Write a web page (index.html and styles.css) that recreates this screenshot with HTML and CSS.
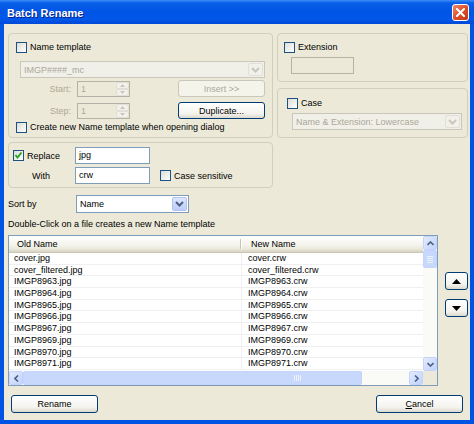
FILE: index.html
```html
<!DOCTYPE html>
<html lang="en">

<head>
  <meta charset="UTF-8">
  <title>Batch Rename</title>
  <link rel="stylesheet" href="styles.css">
</head>

<body>
  <div class="window">
    <div class="titlebar">
      <span class="title">Batch Rename</span>
      <span class="close">
        <svg width="9" height="9" viewBox="0 0 9 9"><path d="M1 1 L8 8 M8 1 L1 8" stroke="#fff" stroke-width="2" stroke-linecap="square"/></svg>
      </span>
    </div>

    <div class="client">
      <div class="top">
        <!-- name template -->
        <div class="group name-group">
          <div class="check"><span class="box"></span>Name template</div>
          <div class="combo disabled name-combo">
            <span class="combo-text">IMGP####_mc</span>
            <span class="drop"><svg width="9" height="6" viewBox="0 0 9 6"><path d="M1 1 L4.5 4.5 L8 1" fill="none" stroke="#C9C7BA" stroke-width="2"/></svg></span>
          </div>
          <div class="num-row">
            <span class="num-label">Start:</span>
            <span class="spin">
              <span class="spin-text">1</span>
              <span class="spin-btns">
                <span class="spin-btn"><svg width="5" height="3" viewBox="0 0 5 3"><path d="M0 3 L2.5 0 L5 3Z" fill="#C9C7BA"/></svg></span>
                <span class="spin-btn"><svg width="5" height="3" viewBox="0 0 5 3"><path d="M0 0 L2.5 3 L5 0Z" fill="#C9C7BA"/></svg></span>
              </span>
            </span>
            <span class="btn disabled side-btn">Insert &gt;&gt;</span>
          </div>
          <div class="num-row step-row">
            <span class="num-label">Step:</span>
            <span class="spin">
              <span class="spin-text">1</span>
              <span class="spin-btns">
                <span class="spin-btn"><svg width="5" height="3" viewBox="0 0 5 3"><path d="M0 3 L2.5 0 L5 3Z" fill="#C9C7BA"/></svg></span>
                <span class="spin-btn"><svg width="5" height="3" viewBox="0 0 5 3"><path d="M0 0 L2.5 3 L5 0Z" fill="#C9C7BA"/></svg></span>
              </span>
            </span>
            <span class="btn side-btn">Duplicate...</span>
          </div>
          <div class="check create-check"><span class="box"></span>Create new Name template when opening dialog</div>
        </div>

        <div class="right-col">
          <div class="group ext-group">
            <div class="check"><span class="box"></span>Extension</div>
            <div class="edit disabled ext-edit"></div>
          </div>
          <div class="group case-group">
            <div class="check"><span class="box"></span>Case</div>
            <div class="combo disabled case-combo">
              <span class="combo-text">Name &amp; Extension: Lowercase</span>
              <span class="drop"><svg width="9" height="6" viewBox="0 0 9 6"><path d="M1 1 L4.5 4.5 L8 1" fill="none" stroke="#C9C7BA" stroke-width="2"/></svg></span>
            </div>
          </div>
        </div>
      </div>

      <!-- replace -->
      <div class="group replace-group">
        <div class="rep-row">
          <div class="check rep-label"><span class="box checked"><svg width="9" height="9" viewBox="0 0 9 9"><path d="M1.5 4 L3.5 6.5 L7.5 1.5" fill="none" stroke="#21A121" stroke-width="1.8"/></svg></span>Replace</div>
          <div class="edit rep-edit">jpg</div>
        </div>
        <div class="rep-row with-row">
          <span class="rep-label with-label">With</span>
          <div class="edit rep-edit">crw</div>
          <div class="check case-check"><span class="box"></span>Case sensitive</div>
        </div>
      </div>

      <div class="sort-row">
        <span class="sort-label">Sort by</span>
        <div class="combo sort-combo">
          <span class="combo-text">Name</span>
          <span class="drop active"><svg width="9" height="6" viewBox="0 0 9 6"><path d="M1 1 L4.5 4.5 L8 1" fill="none" stroke="#4D6185" stroke-width="2"/></svg></span>
        </div>
      </div>

      <div class="hint">Double-Click on a file creates a new Name template</div>

      <div class="files-row">
        <div class="list">
          <div class="list-main">
            <div class="list-head">
              <span class="col1 head-cell">Old Name</span>
              <span class="col2 head-cell">New Name</span>
            </div>
            <div class="row"><span class="col1">cover.jpg</span><span class="col2">cover.crw</span></div>
            <div class="row"><span class="col1">cover_filtered.jpg</span><span class="col2">cover_filtered.crw</span></div>
            <div class="row"><span class="col1">IMGP8963.jpg</span><span class="col2">IMGP8963.crw</span></div>
            <div class="row"><span class="col1">IMGP8964.jpg</span><span class="col2">IMGP8964.crw</span></div>
            <div class="row"><span class="col1">IMGP8965.jpg</span><span class="col2">IMGP8965.crw</span></div>
            <div class="row"><span class="col1">IMGP8966.jpg</span><span class="col2">IMGP8966.crw</span></div>
            <div class="row"><span class="col1">IMGP8967.jpg</span><span class="col2">IMGP8967.crw</span></div>
            <div class="row"><span class="col1">IMGP8969.jpg</span><span class="col2">IMGP8969.crw</span></div>
            <div class="row"><span class="col1">IMGP8970.jpg</span><span class="col2">IMGP8970.crw</span></div>
            <div class="row"><span class="col1">IMGP8971.jpg</span><span class="col2">IMGP8971.crw</span></div>
          </div>

          <div class="vscroll">
            <span class="sb-btn"><svg width="7" height="5" viewBox="0 0 7 5"><path d="M0.5 4 L3.5 1 L6.5 4" fill="none" stroke="#4D6185" stroke-width="1.6"/></svg></span>
            <span class="sb-thumb v-thumb"><i></i><i></i><i></i><i></i></span>
            <span class="sb-track"></span>
            <span class="sb-btn"><svg width="7" height="5" viewBox="0 0 7 5"><path d="M0.5 1 L3.5 4 L6.5 1" fill="none" stroke="#4D6185" stroke-width="1.6"/></svg></span>
          </div>
          <div class="hscroll">
            <span class="sb-btn"><svg width="5" height="7" viewBox="0 0 5 7"><path d="M4 0.5 L1 3.5 L4 6.5" fill="none" stroke="#4D6185" stroke-width="1.6"/></svg></span>
            <span class="sb-thumb h-thumb"><span class="h-grip"><i></i><i></i><i></i><i></i></span></span>
            <span class="sb-track"></span>
            <span class="sb-btn"><svg width="5" height="7" viewBox="0 0 5 7"><path d="M1 0.5 L4 3.5 L1 6.5" fill="none" stroke="#4D6185" stroke-width="1.6"/></svg></span>
          </div>
          <div class="corner"></div>
        </div>

        <div class="move-btns">
          <span class="btn move-btn"><svg width="9" height="5" viewBox="0 0 9 5"><path d="M0 5 L4.5 0 L9 5Z" fill="#000"/></svg></span>
          <span class="btn move-btn"><svg width="9" height="5" viewBox="0 0 9 5"><path d="M0 0 L4.5 5 L9 0Z" fill="#000"/></svg></span>
        </div>
      </div>

      <div class="bottom-row">
        <span class="btn main-btn">Rename</span>
        <span class="btn main-btn"><u>C</u>ancel</span>
      </div>
    </div>
  </div>
</body>

</html>
```

FILE: styles.css
```css
body {
  margin: 0;
  font-family: "Liberation Sans", Arial, sans-serif;
  font-size: 9px;
  color: #000;
}

.window {
  width: 474px;
  height: 424px;
  display: flex;
  flex-direction: column;
  background: #0054E3;
}

/* title bar */
.titlebar {
  height: 24px;
  flex: none;
  display: flex;
  align-items: center;
  justify-content: space-between;
  padding: 1px 5px 0 7px;
  box-sizing: border-box;
  background: linear-gradient(#3C8CF8 0%, #0A5FE8 12%, #0055E5 45%, #0157E9 80%, #0049D7 100%);
}

.title {
  color: #fff;
  font-weight: bold;
  font-size: 11px;
  text-shadow: 1px 1px 0 #0A1E8C;
}

.close {
  width: 17px;
  height: 17px;
  box-sizing: border-box;
  border: 1px solid #fff;
  border-radius: 3px;
  background: linear-gradient(135deg, #F08B6C, #DB4A26 55%, #C23A16);
  display: flex;
  align-items: center;
  justify-content: center;
}

/* client area */
.client {
  flex: 1;
  margin: 0 4px 4px 4px;
  background: #ECE9D8;
  padding: 9px 2px 0 4px;
  box-sizing: border-box;
}

.top {
  display: flex;
  gap: 4px;
}

.group {
  border: 1px solid #D0D0BF;
  border-radius: 4px;
  box-sizing: border-box;
}

.check {
  display: flex;
  align-items: center;
  height: 12px;
  white-space: nowrap;
}

.box {
  width: 11px;
  height: 11px;
  box-sizing: border-box;
  border: 1px solid #1C5180;
  background: linear-gradient(135deg, #DCDCD7, #FFFFFF);
  margin-right: 3px;
  flex: none;
  display: flex;
  align-items: center;
  justify-content: center;
}

/* name template group */
.name-group {
  width: 265px;
  height: 105px;
  padding: 7px 7px 0 7px;
}

.name-combo {
  margin: 8px 0 0 4px;
  width: 245px;
}

.num-row {
  display: flex;
  align-items: center;
  height: 17px;
  margin-top: 2px;
}

.step-row {
  margin-top: 5px;
}

.num-label {
  width: 55px;
  text-align: right;
  margin-right: 6px;
  color: #ACA899;
}

.spin {
  width: 53px;
  height: 16px;
  box-sizing: border-box;
  border: 1px solid #B5B3A8;
  display: flex;
  color: #ACA899;
}

.spin-text {
  flex: 1;
  padding-left: 3px;
  line-height: 14px;
}

.spin-btns {
  width: 13px;
  display: flex;
  flex-direction: column;
}

.spin-btn {
  flex: 1;
  background: #F1F0EA;
  border: 1px solid #E2E0D6;
  border-radius: 2px;
  display: flex;
  align-items: center;
  justify-content: center;
}

.side-btn {
  margin-left: auto;
  width: 87px;
  height: 17px;
}

.create-check {
  margin-top: 2px;
}

/* right column */
.right-col {
  width: 191px;
  display: flex;
  flex-direction: column;
  gap: 6px;
}

.ext-group {
  height: 49px;
  padding: 7px 0 0 6px;
}

.ext-edit {
  margin: 4px 0 0 7px;
  width: 63px;
  height: 16px;
}

.case-group {
  height: 50px;
  padding: 8px 0 0 9px;
}

.case-combo {
  margin: 4px 0 0 5px;
  width: 170px;
}

/* inputs */
.combo {
  display: flex;
  align-items: center;
  height: 17px;
  box-sizing: border-box;
  border: 1px solid #7F9DB9;
  background: #fff;
  padding-right: 1px;
}

.combo-text {
  flex: 1;
  padding-left: 3px;
  white-space: nowrap;
}

.drop {
  width: 15px;
  height: 13px;
  box-sizing: border-box;
  border: 1px solid #E2E0D6;
  border-radius: 2px;
  background: #F1F0EA;
  display: flex;
  align-items: center;
  justify-content: center;
}

.drop.active {
  height: 14px;
  border-color: #B1C3EE;
  background: linear-gradient(#DCE6FC, #BCCEF8);
}

.combo.disabled {
  border-color: #C9C7BA;
  background: #F0EFE8;
  color: #ACA899;
}

.edit {
  height: 17px;
  box-sizing: border-box;
  border: 1px solid #7F9DB9;
  background: #fff;
  padding-left: 3px;
  line-height: 15px;
}

.edit.disabled {
  border-color: #B5B3A8;
  background: #ECE9D8;
}

.btn {
  display: flex;
  align-items: center;
  justify-content: center;
  box-sizing: border-box;
  border: 1px solid #003C74;
  border-radius: 3px;
  background: linear-gradient(#FFFFFF, #F4F3EE 70%, #DCD8CC);
}

.btn.disabled {
  border-color: #C9C7BA;
  color: #ACA899;
  background: #F5F4EA;
}

/* replace group */
.replace-group {
  width: 265px;
  height: 46px;
  margin-top: 4px;
  padding: 4px 0 0 4px;
}

.rep-row {
  display: flex;
  align-items: center;
}

.with-row {
  margin-top: 3px;
}

.rep-label {
  width: 62px;
  height: 17px;
}

.with-label {
  display: flex;
  align-items: center;
  box-sizing: border-box;
  padding-left: 19px;
}

.rep-edit {
  width: 75px;
}

.case-check {
  margin-left: 10px;
}

/* sort */
.sort-row {
  display: flex;
  align-items: center;
  margin-top: 7px;
}

.sort-label {
  width: 68px;
}

.sort-combo {
  width: 113px;
  height: 18px;
}

.hint {
  margin-top: 5px;
  line-height: 12px;
}

/* file list */
.files-row {
  display: flex;
  margin-top: 5px;
}

.list {
  width: 430px;
  height: 151px;
  box-sizing: border-box;
  border: 1px solid #7F9DB9;
  background: #fff;
  display: grid;
  grid-template-columns: 1fr 14px;
  grid-template-rows: 1fr 14px;
}

.list-main {
  overflow: hidden;
}

.list-head {
  display: flex;
  height: 17px;
  box-sizing: border-box;
  background: linear-gradient(#FFFFFF, #F3F2EA 60%, #EBEADB 80%, #D6D2C2);
  border-bottom: 1px solid #CBC7B8;
}

.col1 {
  width: 233px;
  flex: none;
  box-sizing: border-box;
  padding-left: 5px;
  border-right: 1px solid #EFEFEF;
}

.col2 {
  flex: 1;
  padding-left: 6px;
}

.head-cell {
  display: flex;
  align-items: center;
}

.list-head .col1 {
  padding-left: 8px;
  border-right: none;
  position: relative;
}

.list-head .col1::after {
  content: "";
  position: absolute;
  right: 0;
  top: 3px;
  height: 10px;
  border-left: 1px solid #C7C5B2;
  border-right: 1px solid #fff;
}

.list-head .col2 {
  padding-left: 9px;
}

.row {
  display: flex;
  height: 11.7px;
  line-height: 11px;
  box-sizing: border-box;
  border-bottom: 1px solid #EFEFEF;
  white-space: nowrap;
}

/* scrollbars */
.vscroll,
.hscroll {
  display: flex;
  background: #FAFAF7;
}

.vscroll {
  flex-direction: column;
}

.sb-btn {
  width: 14px;
  height: 14px;
  flex: none;
  box-sizing: border-box;
  border: 1px solid #C3D3FD;
  border-radius: 2px;
  background: linear-gradient(135deg, #E3EBFE, #C1D3FB);
  display: flex;
  align-items: center;
  justify-content: center;
}

.sb-track {
  flex: 1;
}

.sb-thumb {
  box-sizing: border-box;
  border: 1px solid #C3D3FD;
  border-radius: 2px;
  background: #C8D7FC;
  display: flex;
  align-items: center;
  justify-content: center;
}

.v-thumb {
  height: 18px;
  flex-direction: column;
  gap: 1px;
}

.v-thumb i {
  width: 6px;
  height: 1px;
  background: #EEF4FE;
}

.h-thumb {
  width: 339px;
}

.h-grip {
  display: flex;
  gap: 1px;
  margin-left: 210px;
}

.h-grip i {
  width: 1px;
  height: 6px;
  background: #EEF4FE;
}

.corner {
  background: #ECE9D8;
}

.move-btns {
  display: flex;
  flex-direction: column;
  gap: 9px;
  margin: 37px 0 0 7px;
}

.move-btn {
  width: 23px;
  height: 18px;
}

/* bottom buttons */
.bottom-row {
  display: flex;
  justify-content: space-between;
  margin-top: 9px;
  padding: 0 5px 0 3px;
}

.main-btn {
  width: 87px;
  height: 18px;
}
```
